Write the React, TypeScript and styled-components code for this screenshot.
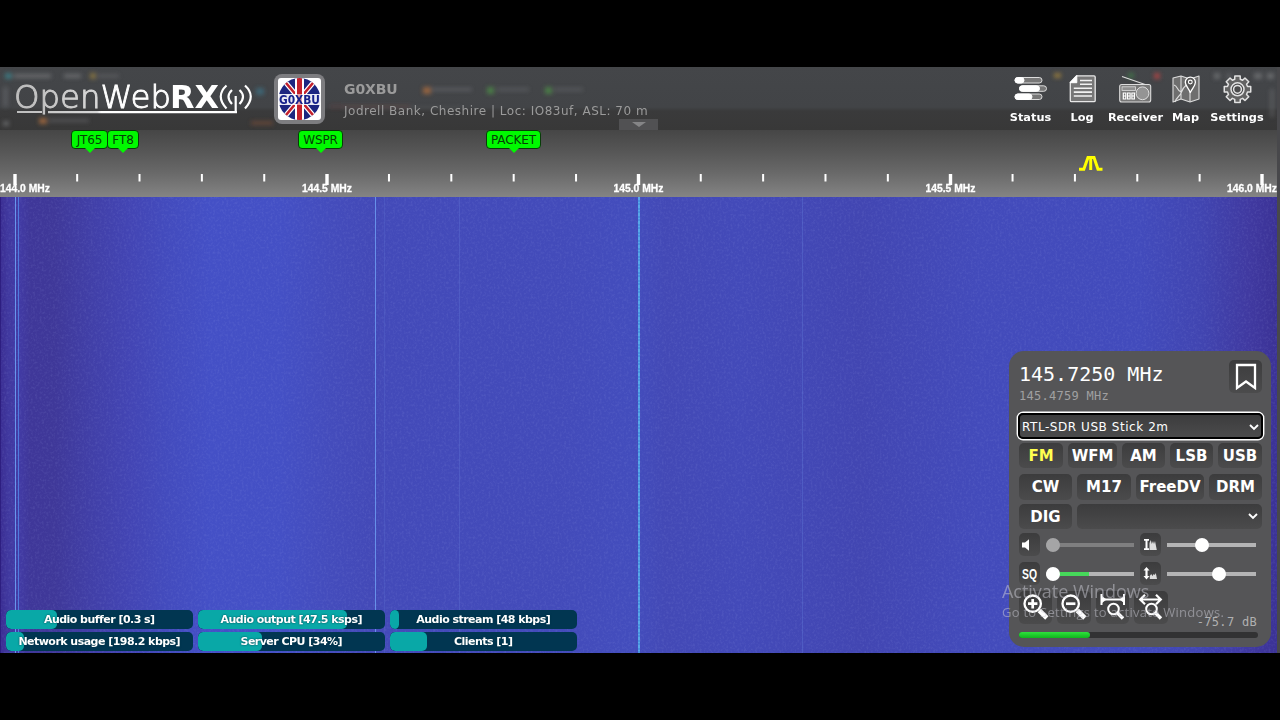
import React from "react";
import styled, { createGlobalStyle, css } from "styled-components";

const SANS = `Verdana, "DejaVu Sans", sans-serif`;
const MONO = `"DejaVu Sans Mono", monospace`;

const GlobalStyle = createGlobalStyle`
  * { box-sizing: border-box; }
  html, body { margin: 0; padding: 0; background: #000; }
  body { width: 1280px; height: 720px; overflow: hidden; font-family: ${SANS}; }
  svg { display: block; }
`;

const Screen = styled.div`
  height: 720px;
  padding: 67px 0;
  background: #000;
`;

const Receiver = styled.main`
  position: relative;
  display: flex;
  flex-direction: column;
  height: 586px;
  border-right: 3px solid #48484b;
  overflow: hidden;
`;

/* ---------- header ---------- */

const Header = styled.header`
  position: relative;
  display: flex;
  flex: 0 0 63px;
  padding: 0 10px 0 14px;
  background: linear-gradient(#444649 0, #424447 40px, #3a3a3b 44px, #383838 63px);
`;

const Backdrop = styled.svg`
  position: absolute;
  inset: 0;
`;

const Logo = styled.svg`
  position: relative;
  flex: none;
  width: 242px;
  height: 63px;
`;

const Avatar = styled.div`
  position: relative;
  width: 51px;
  height: 50px;
  margin: 7px 0 0 18px;
  padding: 4px;
  border-radius: 8px;
  background: #7d7d80;
  svg { border-radius: 3px; background: #fff; }
`;

const Station = styled.div`
  position: relative;
  flex: 1;
  padding: 13px 0 0 19px;
  color: #9b9b9b;
  white-space: nowrap;
`;

const StationName = styled.div`
  font-size: 14px;
  font-weight: 700;
  line-height: 18px;
  letter-spacing: -0.1px;
`;

const StationInfo = styled.div`
  margin-top: 5px;
  font-size: 12px;
  line-height: 17px;
  letter-spacing: 0.51px;
`;

const Handle = styled.div`
  position: absolute;
  left: 619px;
  bottom: 0;
  display: flex;
  justify-content: center;
  width: 39px;
  height: 11px;
  padding-top: 3px;
  background: #515153;
`;

const Nav = styled.nav`
  position: relative;
  display: grid;
  grid-template-columns: 53px 50px 57px 43px 60px;
`;

const NavItem = styled.div`
  display: flex;
  flex-direction: column;
  align-items: center;
  padding-top: 7px;
  color: #fff;
  font-size: 11.3px;
  font-weight: 700;
  line-height: 14px;
  svg { margin-bottom: 6px; }
`;

/* ---------- scale ---------- */

const Scale = styled.section`
  position: relative;
  flex: 0 0 67px;
  background: linear-gradient(#464646 0, #555 20px, #686868 42px, #7c7c7c 60px, #848484 67px);
`;

const Bookmark = styled.div<{ $x: number; $w: number }>`
  position: absolute;
  top: 0;
  left: ${(p) => p.$x}px;
  width: ${(p) => p.$w}px;
  height: 19px;
  border: 1px solid #093b09;
  border-radius: 4px;
  background: #00fa00;
  color: #063f06;
  font-size: 12px;
  line-height: 18px;
  letter-spacing: -0.1px;
  text-align: center;
  &::after {
    content: "";
    position: absolute;
    left: 50%;
    top: 17px;
    margin-left: -5px;
    border: 5px solid transparent;
    border-top-color: #00fa00;
    border-bottom: 0;
  }
`;

/* ---------- waterfall ---------- */

const Waterfall = styled.section`
  position: relative;
  flex: 1;
  background: linear-gradient(
    90deg,
    #3a2d92 0, #40389f 8px, #423ba6 18px, #3f3799 30px, #3f3899 55px, #413fa7 90px,
    #4345b4 130px, #434bbd 165px, #4450c6 210px, #4450c5 280px, #444cbc 330px, #4349b7 375px,
    #434ab9 390px, #434bba 560px, #434dbd 630px, #4349b6 665px, #434ab9 740px, #4246b2 860px,
    #434bbb 980px, #424bbc 1140px, #4145b1 1200px, #4039a0 1250px, #3b3296 1277px
  );
`;

const WaterfallDetail = styled.svg`
  position: absolute;
  inset: 0;
`;

const StatusGrid = styled.div`
  position: absolute;
  left: 5.5px;
  bottom: 2.5px;
  display: grid;
  grid-template-columns: repeat(3, 187.5px);
  gap: 3px 4.5px;
`;

const StatusBar = styled.div<{ $fill: number }>`
  height: 19px;
  border-radius: 5px;
  color: #fff;
  font-size: 11px;
  font-weight: 700;
  line-height: 20px;
  letter-spacing: -0.53px;
  text-align: center;
  white-space: nowrap;
  text-shadow: 0 0 2px #034;
  background: #013651;
  overflow: hidden;
  position: relative;
  &::before {
    content: "";
    position: absolute;
    inset: 0 auto 0 0;
    width: ${(p) => p.$fill}px;
    border-radius: 5px;
    background: #09a8a7;
  }
  span { position: relative; }
`;

/* ---------- receiver panel ---------- */

const Panel = styled.aside`
  position: absolute;
  right: 6px;
  bottom: 6px;
  display: flex;
  flex-direction: column;
  width: 262px;
  height: 296px;
  padding: 9px 9px 0 10px;
  border-radius: 15px;
  background: #555557;
  color: #fff;
`;

const Row = styled.div<{ $h: number; $gap?: number; $mt?: number; $pr?: number }>`
  display: flex;
  flex: none;
  align-items: stretch;
  height: ${(p) => p.$h}px;
  gap: ${(p) => p.$gap ?? 5}px;
  margin-top: ${(p) => p.$mt ?? 0}px;
  padding-right: ${(p) => p.$pr ?? 0}px;
`;

const face = css`
  border-radius: 5px;
  background: linear-gradient(#3c3c3d, #4b4b4c);
`;

const Frequencies = styled.div`
  flex: 1;
  font-family: ${MONO};
  white-space: nowrap;
`;

const MainFrequency = styled.div`
  height: 27px;
  font-size: 20px;
  line-height: 29px;
`;

const HoverFrequency = styled.div`
  font-size: 12px;
  line-height: 18px;
  letter-spacing: 0.27px;
  color: #a0a0a1;
`;

const Button = styled.div<{ $w: number; $active?: boolean }>`
  ${face}
  display: flex;
  flex: 0 0 ${(p) => p.$w}px;
  align-items: center;
  justify-content: center;
  color: ${(p) => (p.$active ? "#ffff50" : "#fff")};
  font-size: 15px;
  font-weight: 700;
  white-space: nowrap;
  svg { flex: none; }
`;

const Select = styled.div<{ $focused?: boolean }>`
  ${face}
  display: flex;
  flex: 1;
  align-items: center;
  justify-content: space-between;
  padding: 0 4px;
  font-size: 12px;
  line-height: 16px;
  letter-spacing: 0.56px;
  ${(p) =>
    p.$focused &&
    css`
      margin: 0 -1px 0 -1px;
      padding: 2px 2px 0 2px;
      border: 2px solid #000;
      box-shadow: 0 0 0 1.4px #fff;
      border-radius: 5px;
    `}
`;

const Slider = styled.div<{ $w: number; $dim?: boolean }>`
  position: relative;
  display: flex;
  align-items: center;
  flex: 0 0 ${(p) => p.$w}px;
  &::before {
    content: "";
    width: 100%;
    height: 4px;
    background: ${(p) => (p.$dim ? "#7f7f80" : "#b4b4b5")};
  }
`;

const SliderLevel = styled.div<{ $w: number }>`
  position: absolute;
  left: 6px;
  width: ${(p) => p.$w}px;
  height: 4px;
  background: #46d95a;
`;

const Knob = styled.div<{ $x: number; $dim?: boolean }>`
  position: absolute;
  left: ${(p) => p.$x - 7}px;
  width: 14px;
  height: 14px;
  border-radius: 50%;
  background: ${(p) => (p.$dim ? "#a5a5a6" : "#fff")};
`;

const Readout = styled.div`
  flex: 1;
  align-self: flex-end;
  margin-bottom: -5px;
  font-family: ${MONO};
  font-size: 12px;
  line-height: 14px;
  letter-spacing: 0.3px;
  text-align: right;
  color: #b0b0b1;
`;

const Meter = styled.div`
  width: 239px;
  height: 6px;
  margin-top: 8px;
  border-radius: 3px;
  background: #323233;
`;

const MeterLevel = styled.div`
  width: 71px;
  height: 6px;
  border-radius: 3px;
  background: linear-gradient(#2ee23c, #10b41e);
`;

const Watermark = styled.div`
  position: absolute;
  left: 1002px;
  top: 512px;
  color: rgba(205, 205, 215, 0.5);
  font-family: "Open Sans", "Noto Sans", sans-serif;
  font-size: 13px;
  line-height: 18px;
  white-space: nowrap;
  letter-spacing: 0.26px;
  strong {
    display: block;
    font-size: 18px;
    font-weight: 400;
    line-height: 24px;
    letter-spacing: -0.03px;
  }
`;

/* ---------- drawings ---------- */

const StatusIcon = () => (
  <svg width="34" height="27" viewBox="0 0 34 27" fill="none" stroke="#ddd" strokeWidth="1">
    <rect x="1" y="1.500" width="27" height="5.500" rx="2.750" fill="#777" />
    <rect x="1" y="1.500" width="9" height="5.500" rx="2.750" fill="#fff" stroke="#fff" />
    <rect x="5.500" y="9.800" width="27" height="5.500" rx="2.750" fill="#777" />
    <rect x="5.500" y="9.800" width="20" height="5.500" rx="2.750" fill="#fff" stroke="#fff" />
    <rect x="1" y="18" width="27" height="5.500" rx="2.750" fill="#777" />
    <rect x="1" y="18" width="17" height="5.500" rx="2.750" fill="#fff" stroke="#fff" />
  </svg>
);

const LogIcon = () => (
  <svg width="28" height="30" viewBox="-1 0 28 30" fill="none">
    <path d="M7.500 1.800H25a1.200 1.200 0 0 1 1.200 1.200v23.500a1.200 1.200 0 0 1-1.200 1.200H2.500a1.200 1.200 0 0 1-1.200-1.200V8.500z" fill="#777" stroke="#e8e8e8" strokeWidth="1.300" />
    <path d="M7.800 1.500v7.200H1z" fill="#fff" stroke="#fff" />
    <path d="M11 6.500h12M11 10.300h12M4.800 14.200H23M4.800 18.100H23M4.800 22H23" stroke="#f2f2f2" strokeWidth="1.600" />
  </svg>
);

const RadioIcon = () => (
  <svg width="34" height="28" viewBox="1 0 34 28" fill="none" stroke="#ddd">
    <path d="M4 1l26 9" strokeWidth="1.100" />
    <rect x="1.700" y="9" width="31" height="17.500" rx="2" fill="#777" strokeWidth="1.100" />
    <rect x="4" y="11.300" width="13.500" height="3.600" fill="#909090" strokeWidth=".8" />
    <circle cx="24.500" cy="17.800" r="6.400" fill="#949494" strokeWidth="1" />
    <path d="M5.300 17.500h2.500v6H5.300zM5.300 20.500h2.500M9.600 17.500h2.500v6H9.600zM9.600 20.500h2.500M13.900 17.500h2.500v6h-2.500zM13.900 20.500h2.500" stroke="#fff" strokeWidth="1.200" />
  </svg>
);

const MapIcon = () => (
  <svg width="28" height="29" viewBox="0 0 28 29" fill="none" stroke="#ddd" strokeWidth="1.100" strokeLinejoin="round">
    <path d="M1 3l8-2 9 3 9-3v23l-9 3-9-3-8 3z" fill="#6e6e6e" />
    <path d="M9 1v23M18 16v11M2 10c4 1 3 6 7 7M3 27c2-6 5-5 7-11s5-5 6-8" />
    <path d="M18.300 17.500c-2-4.500-5-7-5-10.300a5 5 0 0 1 10.100 0c0 3.300-3 5.800-5.100 10.300z" fill="#555" stroke="#fff" strokeWidth="1.300" />
    <circle cx="18.300" cy="7" r="1.900" stroke="#fff" />
  </svg>
);

const GearIcon = () => {
  const points: string[] = [];
  for (let i = 0; i < 8; i++) {
    const a = (i * Math.PI) / 4;
    for (const [d, r] of [[-0.27, 10.4], [-0.2, 13.5], [0.2, 13.5], [0.27, 10.4]]) {
      points.push(`${14.5 + r * Math.sin(a + d)},${14.5 - r * Math.cos(a + d)}`);
    }
  }
  return (
    <svg width="29" height="29" viewBox="0 0 29 29" fill="none" stroke="#e2e2e2" strokeWidth="1.500" strokeLinejoin="round">
      <polygon points={points.join(" ")} fill="#636363" />
      <circle cx="14.500" cy="14.500" r="6.500" fill="#4b4b4c" />
      <circle cx="14.500" cy="14.500" r="3.900" />
    </svg>
  );
};

const Chevron = () => (
  <svg width="10" height="7" viewBox="0 0 10 7" fill="none" stroke="#fff" strokeWidth="1.900">
    <path d="M1 1l4 4 4-4" />
  </svg>
);

const Lens = ({ minus }: { minus?: boolean }) => (
  <svg width="28" height="28" viewBox="0 0 28 28" fill="none" stroke="#fff">
    <circle cx="10.700" cy="9.700" r="8.200" strokeWidth="2.300" />
    <path d={minus ? "M6 9.700h9.400" : "M6 9.700h9.400M10.700 5v9.400"} strokeWidth="2.700" />
    <path d="M17.300 16.500l7.500 7.500" strokeWidth="4.600" />
  </svg>
);

const SpanLens = ({ out }: { out?: boolean }) => (
  <svg width="28" height="28" viewBox="0 0 28 28" fill="none" stroke="#fff">
    {out ? (
      <path d="M3.500 5.500h20M8 .8L3.200 5.500 8 10.200M19 .8l4.800 4.700-4.800 4.700" strokeWidth="2.200" />
    ) : (
      <g strokeWidth="2">
        <path d="M2.500 0v11M25 0v11M3 5.500h22" />
        <path d="M3 2.500l4 3-4 3zM25 2.500l-4 3 4 3z" fill="#fff" strokeWidth=".8" />
      </g>
    )}
    <circle cx="14.500" cy="15" r="5.300" strokeWidth="2" />
    <path d="M18.500 19l5.500 5.500" strokeWidth="3.400" />
  </svg>
);

const SpeakerIcon = () => (
  <svg width="19" height="14" viewBox="0 0 19 14" fill="#fff">
    <path d="M2 4.500h3L9 1.200v11.600L5 9.500H2z" />
  </svg>
);

const AutoLevelIcon = () => (
  <svg width="15" height="13" viewBox="0 0 15 13" fill="#ddd">
    <path d="M1 1h5v1.800H4.500v7.400H6V12H1v-1.800h1.500V2.800H1z" fill="#fff" />
    <path d="M6.500 12V5l1.300-3 1 4 1.200-3 1 3L12 3l1.800 9z" />
  </svg>
);

const LevelIcon = () => (
  <svg width="15" height="13" viewBox="0 0 15 13" fill="#ddd">
    <path d="M3.500 0l3 3.500H4.600v5.500h1.900l-3 3.500-3-3.500h1.900V3.500H.5z" fill="#fff" />
    <path d="M6.800 12V9l1.400-2 1.300 2 1.200-2 1.100 1 1-2 1.200 6z" />
  </svg>
);

const SquelchIcon = () => (
  <svg width="21" height="20" viewBox="0 0 21 20">
    <text x="3" y="15" textLength="15" lengthAdjust="spacingAndGlyphs" fill="#fff" fontFamily="Liberation Sans" fontWeight="700" fontSize="14">SQ</text>
  </svg>
);

const Blurred = () => (
  <Backdrop width="1277" height="63">
    <defs>
      <filter id="soft" x="-20%" y="-200%" width="140%" height="500%">
        <feGaussianBlur stdDeviation="2" />
      </filter>
    </defs>
    <g filter="url(#soft)">
      <g fill="#8b8c8f" opacity=".5">
        <rect x="14" y="7" width="37" height="4" /><rect x="64" y="7" width="17" height="4" />
        <rect x="98" y="7" width="21" height="4" opacity=".5" />
        <rect x="3" y="20" width="5" height="20" opacity=".6" /><rect x="3" y="54" width="6" height="5" />
        <rect x="49" y="52" width="40" height="3" opacity=".7" />
        <rect x="343" y="39" width="118" height="3" opacity=".25" />
        <rect x="432" y="21" width="40" height="3" opacity=".7" /><rect x="497" y="21" width="32" height="3" opacity=".6" />
        <rect x="554" y="21" width="29" height="3" opacity=".6" />
        <rect x="1214" y="6" width="6" height="6" /><rect x="1226" y="6" width="6" height="6" opacity=".5" />
        <rect x="1254" y="6" width="8" height="6" /><rect x="1267" y="6" width="7" height="6" />
        <rect x="1270" y="22" width="4" height="28" opacity=".6" />
      </g>
      <rect x="5" y="6" width="7" height="6" fill="#3c8791" opacity=".7" />
      <rect x="90" y="6" width="6" height="6" fill="#99813f" opacity=".7" />
      <rect x="39" y="51" width="8" height="6" fill="#b8743e" opacity=".7" />
      <rect x="423" y="20" width="8" height="7" fill="#a76b3e" opacity=".8" />
      <rect x="487" y="20" width="7" height="7" fill="#4c8a47" opacity=".8" />
      <rect x="545" y="20" width="7" height="7" fill="#4c8a47" opacity=".8" />
      <rect x="256" y="21" width="8" height="7" fill="#3c7b91" opacity=".6" />
      <rect x="251" y="54" width="22" height="4" fill="#8c5138" opacity=".5" />
      <rect x="330" y="38" width="80" height="3" fill="#733e38" opacity=".35" />
      <rect x="1054" y="6" width="7" height="5" fill="#ab893d" opacity=".7" />
      <rect x="1128" y="6" width="6" height="5" fill="#3f8b4d" opacity=".6" />
      <rect x="1154" y="6" width="6" height="6" fill="#b54444" opacity=".8" />
    </g>
  </Backdrop>
);

const FlagBadge = () => (
  <svg width="43" height="42" viewBox="0 0 43 42">
    <defs><clipPath id="disc"><circle cx="21.500" cy="21" r="21" /></clipPath></defs>
    <g clipPath="url(#disc)">
      <rect width="43" height="42" fill="#1c2580" />
      <path d="M3 -1L40 43M40 -1L3 43" stroke="#fff" strokeWidth="5" />
      <path d="M3 -1L40 43M40 -1L3 43" stroke="#c3202c" strokeWidth="2.500" />
      <path d="M21.500 0v42" stroke="#fff" strokeWidth="9" />
      <path d="M21.500 0v42" stroke="#c3202c" strokeWidth="5" />
    </g>
    <path d="M0 16h43v11H0z" fill="#fff" opacity=".9" />
    <path d="M21.500 16v11" stroke="#c3202c" strokeWidth="5" opacity=".35" />
    <text x="1" y="26.300" textLength="41" lengthAdjust="spacingAndGlyphs" fontFamily="DejaVu Sans" fontWeight="700" fontSize="13" fill="#16218c">G0XBU</text>
  </svg>
);

const majorTicks = [
  { x: 15, label: "144.0 MHz", at: 0, anchor: "start" as const },
  { x: 327, label: "144.5 MHz", at: 327, anchor: "middle" as const },
  { x: 638.5, label: "145.0 MHz", at: 638.5, anchor: "middle" as const },
  { x: 950.5, label: "145.5 MHz", at: 950.5, anchor: "middle" as const },
  { x: 1262, label: "146.0 MHz", at: 1277, anchor: "end" as const },
];
const minorTicks = Array.from({ length: 20 }, (_, i) => i).filter((i) => i % 5 !== 0);

const bookmarks = [
  { x: 71, w: 37, label: "JT65" },
  { x: 107, w: 32, label: "FT8" },
  { x: 298, w: 45, label: "WSPR" },
  { x: 486, w: 55, label: "PACKET" },
];

const carriers = [
  { x: 0, w: 1, color: "#2a1a7c", o: 0.8 },
  { x: 15, w: 1, color: "#6ba0f4", o: 0.9 },
  { x: 18, w: 1, color: "#528bee", o: 0.8 },
  { x: 375, w: 1, color: "#6c9cf2", o: 0.85 },
  { x: 384, w: 1, color: "#5f76d8", o: 0.25 },
  { x: 459, w: 1, color: "#6078d8", o: 0.35 },
  { x: 802, w: 1, color: "#6078d8", o: 0.4 },
];

const statuses = [
  { label: "Audio buffer [0.3 s]", fill: 51 },
  { label: "Audio output [47.5 ksps]", fill: 149 },
  { label: "Audio stream [48 kbps]", fill: 9 },
  { label: "Network usage [198.2 kbps]", fill: 18 },
  { label: "Server CPU [34%]", fill: 64 },
  { label: "Clients [1]", fill: 37 },
];

export default function App() {
  return (
    <>
      <GlobalStyle />
      <Screen>
        <Receiver>
          <Header>
            <Blurred />
            <Logo viewBox="14 67 242 63">
              <defs>
                <linearGradient id="silver" gradientUnits="userSpaceOnUse" x1="16" x2="120" y1="0" y2="0">
                  <stop offset="0" stopColor="#bdbdbd" /><stop offset=".78" stopColor="#d8d8d8" /><stop offset=".82" stopColor="#fff" />
                </linearGradient>
              </defs>
              <g fill="url(#silver)" fontFamily="DejaVu Sans" fontSize="32">
                <text x="14" y="108" fontWeight="200" textLength="157" lengthAdjust="spacingAndGlyphs" stroke="url(#silver)" strokeWidth=".9">OpenWeb</text>
                <text x="170" y="108" fontWeight="700" textLength="49" lengthAdjust="spacingAndGlyphs">RX</text>
              </g>
              <path d="M17 111h25v2H17zM48 111h189v2.200H48z" fill="url(#silver)" />
              <path d="M235.700 96v17" stroke="#fff" strokeWidth="2.200" />
              <path d="M232 90q-7 6.500 0 14M226.500 85.500q-11.500 10.500 0 23M239.500 90q7 6.500 0 14M245 85.500q11.500 10.500 0 23" fill="none" stroke="#fff" strokeWidth="2.200" />
            </Logo>
            <Avatar><FlagBadge /></Avatar>
            <Station>
              <StationName>G0XBU</StationName>
              <StationInfo>Jodrell Bank, Cheshire | Loc: IO83uf, ASL: 70 m</StationInfo>
            </Station>
            <Handle>
              <svg width="14" height="6"><path d="M0 0h14L7 5z" fill="#858587" /></svg>
            </Handle>
            <Nav>
              <NavItem><svg width="34" height="31" viewBox="0 0 34 31"><g transform="translate(0 2)"><StatusIcon /></g></svg>Status</NavItem>
              <NavItem><svg width="28" height="31"><LogIcon /></svg>Log</NavItem>
              <NavItem><svg width="34" height="31"><g transform="translate(0 1.500)"><RadioIcon /></g></svg>Receiver</NavItem>
              <NavItem><svg width="28" height="31"><g transform="translate(0 1)"><MapIcon /></g></svg>Map</NavItem>
              <NavItem><svg width="29" height="31"><g transform="translate(0 .8)"><GearIcon /></g></svg>Settings</NavItem>
            </Nav>
          </Header>

          <Scale>
            <svg width="1277" height="67">
              <g fill="#fff">
                {minorTicks.map((i) => (
                  <rect key={i} x={13.8 + i * 62.36} y="44" width="2" height="7.500" />
                ))}
                {majorTicks.map((t) => (
                  <rect key={t.x} x={t.x - 1.7} y="44" width="3.400" height="11" />
                ))}
                {majorTicks.map((t) => (
                  <text key={t.label} x={t.at} y="61.500" textAnchor={t.anchor} textLength="50" lengthAdjust="spacingAndGlyphs" fontFamily="Liberation Sans" fontWeight="700" fontSize="10.500" stroke="#fff" strokeWidth=".3">{t.label}</text>
                ))}
              </g>
              <path d="M1079 39.200h4.800L1088 27.600h6L1098 39.200h4.500M1090.700 28v12" fill="none" stroke="#ff0" strokeWidth="3" />
            </svg>
            {bookmarks.map((b) => (
              <Bookmark key={b.label} $x={b.x} $w={b.w}>{b.label}</Bookmark>
            ))}
          </Scale>

          <Waterfall>
            <WaterfallDetail width="1277" height="456">
              <defs>
                <filter id="static" x="0" y="0" width="100%" height="100%">
                  <feTurbulence type="fractalNoise" baseFrequency=".45 .4" numOctaves="2" seed="4" />
                  <feColorMatrix values="0 0 0 0 .4  0 0 0 0 .45  0 0 0 0 .85  1.6 0 0 0 -.72" />
                </filter>
              </defs>
              <rect width="1277" height="456" filter="url(#static)" opacity=".18" />
              {carriers.map((c) => (
                <rect key={c.x} x={c.x} width={c.w} height="456" fill={c.color} opacity={c.o} />
              ))}
              <rect x="638" width="2" height="456" fill="#4a93e2" />
              <path d="M639 0v456" stroke="#68bdf0" strokeWidth="1" strokeDasharray="3 2 1 2" />
            </WaterfallDetail>
          </Waterfall>

          <StatusGrid>
            {statuses.map((s) => (
              <StatusBar key={s.label} $fill={s.fill}><span>{s.label}</span></StatusBar>
            ))}
          </StatusGrid>

          <Panel>
            <Row $h={46}>
              <Frequencies>
                <MainFrequency>145.7250 MHz</MainFrequency>
                <HoverFrequency>145.4759 MHz</HoverFrequency>
              </Frequencies>
              <Row $h={33}>
                <Button $w={33}>
                  <svg width="22" height="27" viewBox="0 0 22 27" fill="none" stroke="#fff" strokeWidth="2.300">
                    <path d="M2 2h18v23l-9-6.500L2 25z" />
                  </svg>
                </Button>
              </Row>
            </Row>
            <Row $h={26} $mt={7}>
              <Select $focused>RTL-SDR USB Stick 2m<Chevron /></Select>
            </Row>
            <Row $h={25} $mt={4}>
              <Button $w={44} $active>FM</Button>
              <Button $w={49}>WFM</Button>
              <Button $w={43}>AM</Button>
              <Button $w={43}>LSB</Button>
              <Button $w={44}>USB</Button>
            </Row>
            <Row $h={26} $mt={6}>
              <Button $w={53}>CW</Button>
              <Button $w={54}>M17</Button>
              <Button $w={68}>FreeDV</Button>
              <Button $w={53}>DRM</Button>
            </Row>
            <Row $h={25} $mt={4}>
              <Button $w={53}>DIG</Button>
              <Select><span /><Chevron /></Select>
            </Row>
            <Row $h={23} $mt={4} $gap={6}>
              <Button $w={21}><SpeakerIcon /></Button>
              <Slider $w={88} $dim><Knob $x={7} $dim /></Slider>
              <Button $w={21}><AutoLevelIcon /></Button>
              <Slider $w={89}><Knob $x={35} /></Slider>
            </Row>
            <Row $h={23} $mt={6} $gap={6}>
              <Button $w={21}><SquelchIcon /></Button>
              <Slider $w={88}><SliderLevel $w={37} /><Knob $x={7} /></Slider>
              <Button $w={21}><LevelIcon /></Button>
              <Slider $w={89}><Knob $x={52} /></Slider>
            </Row>
            <Row $h={33} $mt={6} $pr={5}>
              <Button $w={33}><Lens /></Button>
              <Button $w={34}><Lens minus /></Button>
              <Button $w={33}><SpanLens /></Button>
              <Button $w={34}><SpanLens out /></Button>
              <Readout>-75.7 dB</Readout>
            </Row>
            <Meter><MeterLevel /></Meter>
          </Panel>

          <Watermark>
            <strong>Activate Windows</strong>
            Go to Settings to activate Windows.
          </Watermark>
        </Receiver>
      </Screen>
    </>
  );
}
